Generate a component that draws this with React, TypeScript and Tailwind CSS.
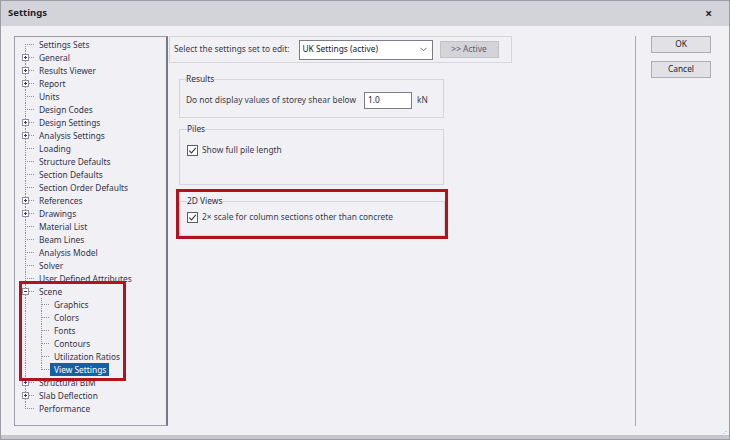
import React from "react";

type Node = { label: string; level: 0 | 1; exp?: "+" | "-"; selected?: boolean };

const tree: Node[] = [
  { label: "Settings Sets", level: 0 },
  { label: "General", level: 0, exp: "+" },
  { label: "Results Viewer", level: 0, exp: "+" },
  { label: "Report", level: 0, exp: "+" },
  { label: "Units", level: 0 },
  { label: "Design Codes", level: 0 },
  { label: "Design Settings", level: 0, exp: "+" },
  { label: "Analysis Settings", level: 0, exp: "+" },
  { label: "Loading", level: 0 },
  { label: "Structure Defaults", level: 0 },
  { label: "Section Defaults", level: 0 },
  { label: "Section Order Defaults", level: 0 },
  { label: "References", level: 0, exp: "+" },
  { label: "Drawings", level: 0, exp: "+" },
  { label: "Material List", level: 0 },
  { label: "Beam Lines", level: 0 },
  { label: "Analysis Model", level: 0 },
  { label: "Solver", level: 0 },
  { label: "User Defined Attributes", level: 0 },
  { label: "Scene", level: 0, exp: "-" },
  { label: "Graphics", level: 1 },
  { label: "Colors", level: 1 },
  { label: "Fonts", level: 1 },
  { label: "Contours", level: 1 },
  { label: "Utilization Ratios", level: 1 },
  { label: "View Settings", level: 1, selected: true },
  { label: "Structural BIM", level: 0, exp: "+" },
  { label: "Slab Deflection", level: 0, exp: "+" },
  { label: "Performance", level: 0 },
];

function Expander({ sign }: { sign: "+" | "-" }) {
  return (
    <svg className="absolute left-[7px] top-[3px]" width="7" height="7" viewBox="0 0 7 7">
      <rect x="0.5" y="0.5" width="6" height="6" fill="#fff" stroke="#8f8fa0" />
      <line x1="2" y1="3.5" x2="5" y2="3.5" stroke="#3a3a60" />
      {sign === "+" && <line x1="3.5" y1="2" x2="3.5" y2="5" stroke="#3a3a60" />}
    </svg>
  );
}

function TreeRow({ node, index }: { node: Node; index: number }) {
  const first = index === 0;
  const last = index === tree.length - 1;
  const childLast = node.level === 1 && tree[index + 1]?.level !== 1;
  return (
    <div className="flex h-[13px] items-center">
      <div className="relative h-full w-[20px] shrink-0">
        <span
          className={`absolute left-[10px] w-0 border-l border-dotted border-[#8e8e9c] ${
            first ? "top-[6px] bottom-0" : last ? "top-0 h-[7px]" : "top-0 bottom-0"
          }`}
        />
        {node.level === 0 && (
          <span className="absolute left-[10px] top-[6px] w-[9px] border-t border-dotted border-[#8e8e9c]" />
        )}
        {node.exp && <Expander sign={node.exp} />}
      </div>
      {node.level === 1 && (
        <div className="relative h-full w-[15px] shrink-0">
          <span
            className={`absolute left-[6px] w-0 border-l border-dotted border-[#8e8e9c] ${
              childLast ? "top-0 h-[7px]" : "top-0 bottom-0"
            }`}
          />
          <span className="absolute left-[6px] top-[6px] w-[8px] border-t border-dotted border-[#8e8e9c]" />
        </div>
      )}
      <span
        className={`whitespace-nowrap pl-[4px] pr-[3px] leading-[13px] ${
          node.selected ? "bg-[#1160a8] text-white" : "text-[#33334a]"
        }`}
      >
        {node.label}
      </span>
    </div>
  );
}

function CheckBox() {
  return (
    <span className="flex h-[11px] w-[11px] shrink-0 items-center justify-center border border-[#5c5c6a] bg-white">
      <svg width="9" height="9" viewBox="0 0 9 9">
        <path d="M1.2 4.6 L3.5 6.9 L7.8 1.8" fill="none" stroke="#3a3a48" strokeWidth="1.1" />
      </svg>
    </span>
  );
}

export default function App() {
  return (
    <div
      className="flex h-[440px] w-[730px] flex-col border border-[#9c9ca4] bg-[#f1f1f5] text-[8.4px] text-[#3c3c4c]"
      style={{ fontFamily: '"Noto Sans", "Open Sans", sans-serif' }}
    >
      {/* title bar */}
      <div className="flex h-[25px] shrink-0 items-center justify-between bg-[#d3d4d9] pl-[7px] pr-[17px]">
        <span className="text-[9.5px] font-bold text-[#1e1e28]">Settings</span>
        <span className="text-[12px] font-bold leading-none text-[#1e1e28]">×</span>
      </div>

      {/* body */}
      <div className="flex min-h-0 flex-1 pl-[13px] pr-[18px] pt-[10px] pb-[9px]">
        {/* tree */}
        <div className="relative h-[390px] w-[154px] shrink-0 border-y border-l border-[#9e9eaa] border-r-[2px] border-r-[#7a7a86] border-r-dotted bg-[#f1f1f5] pt-[1px]">
          {tree.map((n, i) => (
            <TreeRow key={n.label} node={n} index={i} />
          ))}
          <div className="pointer-events-none absolute left-[4px] top-[244px] h-[100px] w-[107px] border-[3px] border-[#b1121f]" />
        </div>

        {/* content */}
        <div className="ml-[1px] flex flex-1 flex-col">
          <div className="flex h-[27px] w-[343px] items-center border border-[#d6d6dc] pl-[4px]">
            <span className="whitespace-nowrap">Select the settings set to edit:</span>
            <div className="ml-[9px] flex h-[20px] w-[134px] items-center justify-between border border-[#7c7c86] bg-white pl-[3px] pr-[5px] text-[#222230]">
              <span>UK Settings (active)</span>
              <svg width="7" height="5" viewBox="0 0 7 5">
                <path d="M0.5 0.8 L3.5 3.8 L6.5 0.8" fill="none" stroke="#6a6a76" strokeWidth="1" />
              </svg>
            </div>
            <div className="ml-[7px] flex h-[17px] w-[59px] items-center justify-center border border-[#c2c2c8] bg-[#d3d3d8] text-[#5c5c70]">
              &gt;&gt; Active
            </div>
          </div>

          <div className="ml-[10px] mt-[10px] flex w-[265px] flex-col">
            <fieldset className="h-[45px] border border-[#d6d6dc] px-[6px]">
              <legend className="px-0 leading-[12px] text-[#2c2c3c]">Results</legend>
              <div className="mt-[7px] flex items-center">
                <span className="whitespace-nowrap">Do not display values of storey shear below</span>
                <div className="ml-[8px] flex h-[17px] w-[48px] items-center border border-[#7c7c86] bg-white pl-[3px] text-[#222230]">
                  1.0
                </div>
                <span className="ml-[5px]">kN</span>
              </div>
            </fieldset>

            <fieldset className="mt-[5px] h-[62px] border border-[#d6d6dc] px-[7px]">
              <legend className="px-0 leading-[12px] text-[#2c2c3c]">Piles</legend>
              <div className="mt-[9px] flex items-center gap-[4px]">
                <CheckBox />
                <span>Show full pile length</span>
              </div>
            </fieldset>

            <div className="-ml-[3px] -mr-[4px] mt-[4px] border-[3px] border-[#b1121f]">
              <fieldset className="mt-[3px] h-[41px] border border-[#d6d6dc] px-[7px]">
                <legend className="px-0 leading-[12px] text-[#2c2c3c]">2D Views</legend>
                <div className="mt-[4px] flex items-center gap-[4px]">
                  <CheckBox />
                  <span>2× scale for column sections other than concrete</span>
                </div>
              </fieldset>
            </div>
          </div>
        </div>

        {/* separator + buttons */}
        <div className="h-[390px] w-px shrink-0 bg-[#a9a9b2]" />
        <div className="ml-[15px] flex flex-col gap-[8px]">
          <div className="flex h-[17px] w-[60px] items-center justify-center border border-[#adadb4] bg-[#e2e2e6] text-[#22222e]">
            OK
          </div>
          <div className="flex h-[17px] w-[60px] items-center justify-center border border-[#adadb4] bg-[#e2e2e6] text-[#22222e]">
            Cancel
          </div>
        </div>
      </div>

      {/* bottom edge */}
      <div className="relative h-[4px] shrink-0 bg-[#c6c6cc]">
        <span className="absolute right-[2px] -top-[5px] text-[6px] leading-none text-[#9a9aa4]">⋰</span>
      </div>
    </div>
  );
}
